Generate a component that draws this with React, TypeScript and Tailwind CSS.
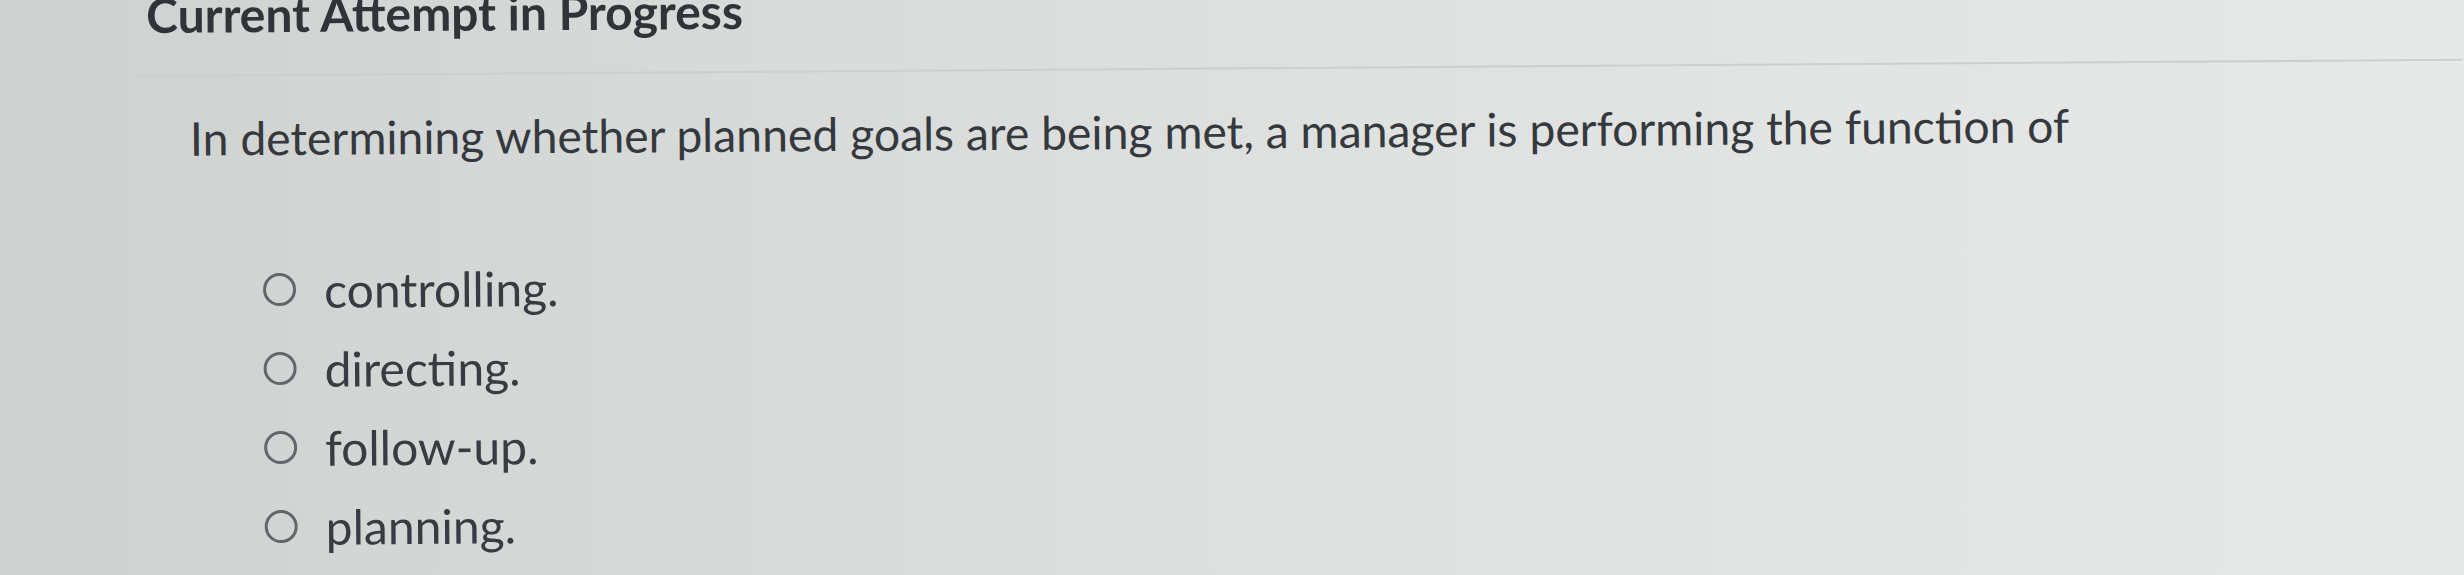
import React from 'react';

const options = ['controlling.', 'directing.', 'follow-up.', 'planning.'];

const RadioOption: React.FC<{ label: string }> = ({ label }) => (
  <label className="flex h-[79px] items-center">
    <span className="ml-[263px] box-border h-[33px] w-[33px] rounded-full border-[3px] border-[#62666a]" />
    <span className="ml-[28px] text-[48px] leading-[79px] text-[#383c40]">{label}</span>
  </label>
);

export default function App() {
  return (
    <div
      className="h-[575px] w-[2464px] overflow-hidden bg-gradient-to-r from-[#cdd1d0] via-[#dde0de] to-[#e7e9e8]"
      style={{ fontFamily: 'Lato, "Noto Sans", sans-serif' }}
    >
      {/* slight tilt, as in the photo of the screen */}
      <div className="origin-left -rotate-[0.4deg] pt-[2px]">
        {/* header */}
        <div className="ml-[140px] h-[76px] border-b-2 border-[#cbcfce]">
          <h1 className="pl-[8px] text-[48px] font-bold leading-[27px] text-[#2f3439]">
            Current Attempt in Progress
          </h1>
        </div>

        {/* question */}
        <p className="ml-[191px] mt-[38px] text-[46.3px] leading-[46px] text-[#35393d]">
          In determining whether planned goals are being met, a manager is performing the function of
        </p>

        {/* answer choices */}
        <div className="mt-[90px]">
          {options.map((o) => (
            <RadioOption key={o} label={o} />
          ))}
        </div>
      </div>
    </div>
  );
}
